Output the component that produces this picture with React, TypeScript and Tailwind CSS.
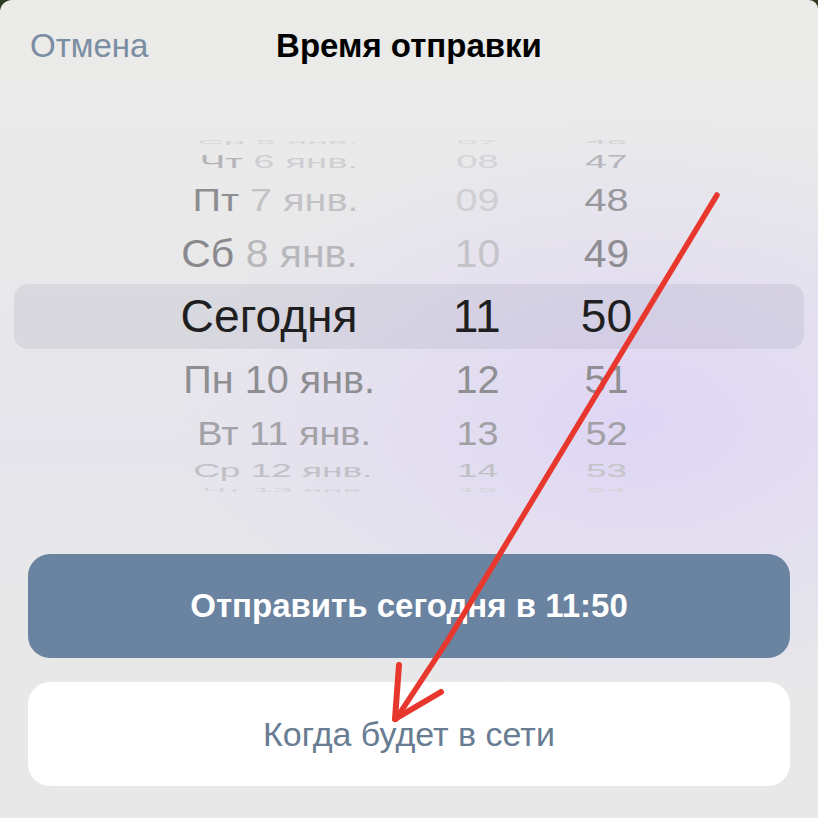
import React from "react";

type Row = {
  h: number;
  day: string;
  date: string;
  hr: string;
  min: string;
  sx: number;
  sy: number;
  dx: number;
  cDay: string;
  cDate: string;
  cHr: string;
  cMin: string;
  selected?: boolean;
};

const rows: Row[] = [
  { h: 8, day: "Ср", date: "5 янв.", hr: "07", min: "46", sx: 0.85, sy: 0.14, dx: 0, cDay: "#d2d2d6", cDate: "#d8d8dc", cHr: "#dadade", cMin: "#d2d2d6" },
  { h: 31, day: "Чт", date: "6 янв.", hr: "08", min: "47", sx: 0.87, sy: 0.42, dx: 0, cDay: "#b4b4b8", cDate: "#cfcfd3", cHr: "#d4d4d8", cMin: "#b6b6ba" },
  { h: 46, day: "Пт", date: "7 янв.", hr: "09", min: "48", sx: 0.9, sy: 0.72, dx: 0, cDay: "#8e8e92", cDate: "#c2c2c6", cHr: "#cfcfd2", cMin: "#98989c" },
  { h: 61, day: "Сб", date: "8 янв.", hr: "10", min: "49", sx: 0.93, sy: 0.88, dx: 0, cDay: "#8a8a8e", cDate: "#b8b8bc", cHr: "#c4c4c8", cMin: "#8e8e92" },
  { h: 65, day: "Сегодня", date: "", hr: "11", min: "50", sx: 1.05, sy: 1.03, dx: 0, cDay: "#1f1f22", cDate: "#1f1f22", cHr: "#1f1f22", cMin: "#1f1f22", selected: true },
  { h: 60, day: "Пн", date: "10 янв.", hr: "12", min: "51", sx: 0.9, sy: 0.9, dx: 17, cDay: "#8e8e93", cDate: "#8e8e93", cHr: "#8e8e93", cMin: "#8e8e93" },
  { h: 49, day: "Вт", date: "11 янв.", hr: "13", min: "52", sx: 0.86, sy: 0.74, dx: 13, cDay: "#a2a2a7", cDate: "#a2a2a7", cHr: "#a0a0a5", cMin: "#a0a0a5" },
  { h: 26, day: "Ср", date: "12 янв.", hr: "14", min: "53", sx: 0.84, sy: 0.42, dx: 14, cDay: "#c0c0c6", cDate: "#c0c0c6", cHr: "#c0c0c6", cMin: "#c4c4c9" },
  { h: 12, day: "Чт", date: "13 янв.", hr: "15", min: "54", sx: 0.82, sy: 0.14, dx: 14, cDay: "#d4d4d9", cDate: "#d4d4d9", cHr: "#d4d4d9", cMin: "#d4d4d9" },
];

function PickerRow({ r }: { r: Row }) {
  return (
    <div
      className={
        "flex items-center overflow-visible " +
        (r.selected ? "rounded-[14px] bg-[rgba(110,108,140,0.12)]" : "")
      }
      style={{ height: r.h }}
    >
      <div className="flex w-[344px] justify-end">
        <span
          className="whitespace-nowrap leading-none"
          style={{
            transform: `translateX(${r.dx}px) scale(${r.sx}, ${r.sy})`,
            transformOrigin: "right center",
          }}
        >
          <span style={{ color: r.cDay }}>{r.day}</span>
          {r.date && <span style={{ color: r.cDate }}> {r.date}</span>}
        </span>
      </div>
      <div className="ml-[79px] flex w-[80px] justify-center">
        <span
          className="leading-none"
          style={{ color: r.cHr, transform: `scale(${r.sx}, ${r.sy})` }}
        >
          {r.hr}
        </span>
      </div>
      <div className="ml-[49px] flex w-[80px] justify-center">
        <span
          className="leading-none"
          style={{ color: r.cMin, transform: `scale(${r.sx}, ${r.sy})` }}
        >
          {r.min}
        </span>
      </div>
    </div>
  );
}

function Arrow() {
  return (
    <svg
      className="pointer-events-none absolute left-0 top-0"
      width="818"
      height="818"
      viewBox="0 0 818 818"
      fill="none"
    >
      <g stroke="#e8382d" strokeLinecap="round" strokeLinejoin="round">
        <path d="M717 195 L448 640 L396 719" strokeWidth="5.5" />
        <path d="M399 665 L395 719" strokeWidth="6" />
        <path d="M441 692 L395 719" strokeWidth="6" />
      </g>
    </svg>
  );
}

export default function App() {
  return (
    <div className="relative h-[818px] w-[818px] overflow-hidden bg-[#2f3a22] font-['Liberation_Sans',Arial,sans-serif]">
      <div className="flex h-full flex-col rounded-tl-[12px] rounded-tr-[9px] bg-[#e8e8e8] bg-[radial-gradient(ellipse_470px_300px_at_640px_420px,rgba(223,213,245,0.95)_0%,rgba(226,220,242,0.6)_55%,rgba(232,232,232,0)_100%),linear-gradient(180deg,#ebebe9_0%,#e9e9ea_30%,#e6e5ec_55%,#e8e8e9_75%,#e8e8e9_100%)]">
        {/* header */}
        <div className="grid h-[90px] grid-cols-[1fr_auto_1fr] items-center px-[30px]">
          <span className="text-[33px] leading-none text-[#7a8da2]">Отмена</span>
          <span className="text-[33px] font-bold leading-none text-black">Время отправки</span>
          <span />
        </div>

        {/* date / hour / minute wheel */}
        <div className="mt-[48px] flex flex-col px-[14px] text-[44px]">
          {rows.map((r, i) => (
            <PickerRow key={i} r={r} />
          ))}
        </div>

        {/* actions */}
        <div className="mt-[58px] flex flex-col gap-[24px] px-[28px]">
          <button className="flex h-[104px] items-center justify-center rounded-[22px] bg-[#6a83a0] text-[33px] font-bold text-white">
            Отправить сегодня в 11:50
          </button>
          <button className="flex h-[104px] items-center justify-center rounded-[22px] bg-white text-[34px] text-[#687c92]">
            Когда будет в сети
          </button>
        </div>
      </div>
      <Arrow />
    </div>
  );
}
